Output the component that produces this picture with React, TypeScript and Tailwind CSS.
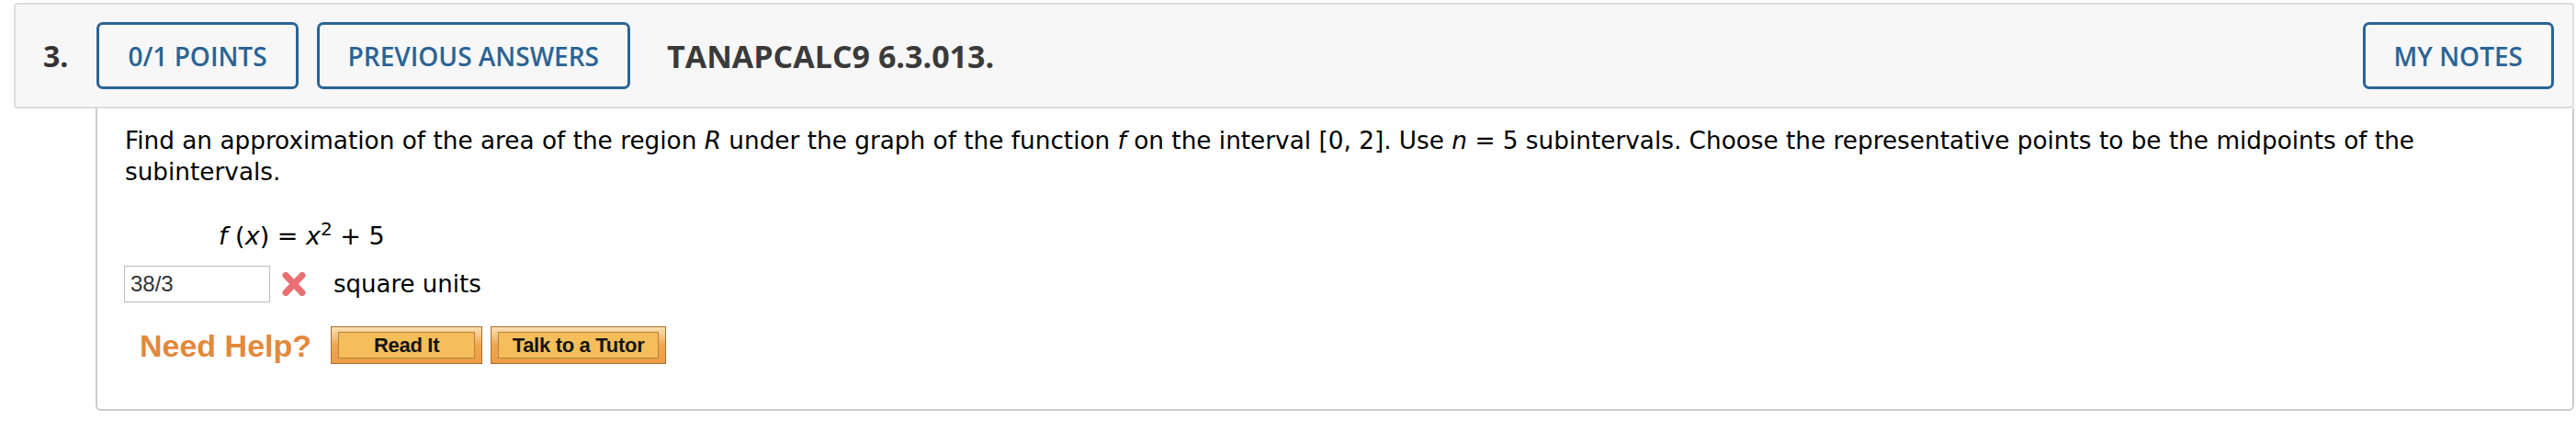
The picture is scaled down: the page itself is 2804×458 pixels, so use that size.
const blue = "border-[#2a6496] text-[#2a6496]";

function TagButton({ label }: { label: string }) {
  return (
    <div
      className={`flex h-[73px] items-center rounded-[7px] border-[3px] bg-[#f7f7f7] px-[31px] text-[28px] font-semibold leading-none ${blue}`}
      style={{ fontFamily: '"Open Sans", sans-serif' }}
    >
      {label}
    </div>
  );
}

function HelpButton({ label, width }: { label: string; width: string }) {
  return (
    <div
      className={`flex h-[41px] ${width} flex-col border border-[#a86f32] bg-gradient-to-b from-[#fbe0b4] via-[#efa650] to-[#ec9c44] px-[7px] pt-[5px] pb-[5px]`}
    >
      <div
        className="flex flex-1 items-center justify-center border border-[#b5823f] bg-[#f4bf5b] text-[22px] font-bold leading-none tracking-[-0.3px] text-[#141414]"
        style={{ fontFamily: '"Liberation Sans", Arial, sans-serif' }}
      >
        {label}
      </div>
    </div>
  );
}

function WrongMark() {
  return (
    <svg width="26" height="28" viewBox="0 0 26 28" className="shrink-0">
      <g stroke="#e8696b" strokeWidth="7" strokeLinecap="round" opacity="0.95">
        <line x1="4" y1="4.5" x2="22" y2="23.5" />
        <line x1="22" y1="4.5" x2="4" y2="23.5" />
      </g>
    </svg>
  );
}

export default function App() {
  const body = { fontFamily: '"DejaVu Sans", Verdana, sans-serif' };
  return (
    <div className="h-[458px] w-[2804px] bg-white pt-[3px] pl-[15px] pr-[2px]">
      <div className="flex h-[115px] items-center rounded-[4px] border-2 border-[#dddddd] bg-[#f7f7f7] pl-[30px] pr-[20px]">
        <span
          className="text-[32px] font-bold leading-none text-[#333333]"
          style={{ fontFamily: '"Open Sans", sans-serif' }}
        >
          3.
        </span>
        <div className="ml-[31px] flex gap-[20px]">
          <TagButton label="0/1 POINTS" />
          <TagButton label="PREVIOUS ANSWERS" />
        </div>
        <span
          className="ml-[40px] text-[34px] font-bold leading-none text-[#3a3a3a]"
          style={{ fontFamily: '"Open Sans", sans-serif' }}
        >
          TANAPCALC9 6.3.013.
        </span>
        <div className="ml-auto">
          <TagButton label="MY NOTES" />
        </div>
      </div>

      <div
        className="ml-[89px] h-[329px] rounded-b-[6px] border-x-2 border-b-2 border-[#cccccc] pl-[30px] pt-[18px] text-black"
        style={body}
      >
        <p className="text-[26.3px] leading-[34px]">
          Find an approximation of the area of the region <i>R</i> under the graph of the function <i>f</i> on the
          interval [0, 2]. Use <i>n</i> = 5 subintervals. Choose the representative points to be the midpoints of the
          <br />
          subintervals.
        </p>

        <div className="mt-[36px] pl-[102px] text-[27px] leading-[34px]">
          <i>f</i> (<i>x</i>) = <i>x</i>
          <sup className="text-[20px]">2</sup> + 5
        </div>

        <div className="mt-[15px] -ml-[1px] flex items-center">
          <div
            className="flex h-[40px] w-[159px] items-center border border-[#bbbbbb] bg-white pl-[6px] text-[24px] text-[#333333]"
            style={{ fontFamily: '"Liberation Sans", Arial, sans-serif' }}
          >
            38/3
          </div>
          <div className="ml-[13px]">
            <WrongMark />
          </div>
          <span className="ml-[30px] text-[26px] leading-none">square units</span>
        </div>

        <div className="mt-[26px] flex items-center pl-[16px]">
          <span
            className="text-[34px] font-bold leading-none text-[#e3893b]"
            style={{ fontFamily: '"Liberation Sans", Arial, sans-serif' }}
          >
            Need Help?
          </span>
          <div className="ml-[21px] flex gap-[9px]">
            <HelpButton label="Read It" width="w-[165px]" />
            <HelpButton label="Talk to a Tutor" width="w-[191px]" />
          </div>
        </div>
      </div>
    </div>
  );
}
